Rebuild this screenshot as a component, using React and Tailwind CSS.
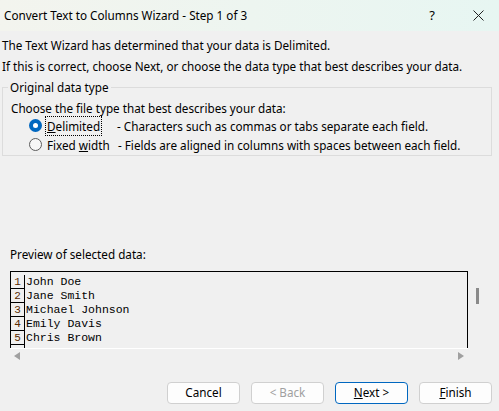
import React from 'react';

const ui = { fontFamily: '"Noto Sans", "Open Sans", sans-serif' };
const mono = { fontFamily: '"Liberation Mono", "Courier New", monospace' };

const rows = ['John Doe', 'Jane Smith', 'Michael Johnson', 'Emily Davis', 'Chris Brown'];

function Radio({ checked }) {
  return checked ? (
    <span className="block shrink-0 w-[13px] h-[13px] rounded-full bg-[#0067c0] flex items-center justify-center">
      <span className="block w-[5px] h-[5px] rounded-full bg-white" />
    </span>
  ) : (
    <span className="block shrink-0 w-[13px] h-[13px] rounded-full border border-[#5c5c5c] bg-[#f7f7f7]" />
  );
}

function Btn({ children, primary, disabled }) {
  return (
    <button
      className={`w-[73px] h-[22px] rounded-[4px] text-[11.7px] leading-none bg-[#fdfdfd] border ${
        primary ? 'border-[#0067c0]' : 'border-[#d0d0d0]'
      } ${disabled ? 'text-[#a0a0a0]' : 'text-black'}`}
    >
      {children}
    </button>
  );
}

export default function App() {
  return (
    <div className="w-[499px] h-[411px] bg-[#f0f0f0] flex flex-col text-black overflow-hidden" style={ui}>
      {/* title bar */}
      <div className="h-[31px] shrink-0 flex items-center bg-gradient-to-r from-[#f3f4ee] to-[#e7f6f2]">
        <span className="pl-[4px] text-[11.7px] flex-1">Convert Text to Columns Wizard - Step 1 of 3</span>
        <span className="w-[50px] text-center text-[13px]">?</span>
        <span className="w-[42px] flex justify-center">
          <svg width="11" height="11" viewBox="0 0 11 11">
            <path d="M0.5 0.5 L10.5 10.5 M10.5 0.5 L0.5 10.5" stroke="#222" strokeWidth="1" />
          </svg>
        </span>
      </div>

      <div className="flex flex-col text-[11.7px] leading-[16px]">
        <p className="pl-[2px] mt-[6px]">The Text Wizard has determined that your data is Delimited.</p>
        <p className="pl-[2px] mt-[5px]">If this is correct, choose Next, or choose the data type that best describes your data.</p>

        {/* group box */}
        <div className="relative mx-[2px] w-[490px] mt-[13px] h-[69px] border border-[#dcdcdc]">
          <span className="absolute left-[5px] -top-[9px] px-[2px] bg-[#f0f0f0]">Original data type</span>
          <p className="pl-[8px] mt-[12px]">Choose the file type that best describes your data:</p>
          <div className="flex items-center mt-[1px] h-[17px]">
            <span className="ml-[26px] mr-[3px]"><Radio checked /></span>
            <span className="w-[72px]">
              <span className="border border-dotted border-black px-[1px] py-[1px]">
                <span className="underline">D</span>elimited
              </span>
            </span>
            <span>- Characters such as commas or tabs separate each field.</span>
          </div>
          <div className="flex items-center mt-[2px] h-[17px]">
            <span className="ml-[26px] mr-[5px]"><Radio /></span>
            <span className="w-[71px]">
              Fixed <span className="underline">w</span>idth
            </span>
            <span>- Fields are aligned in columns with spaces between each field.</span>
          </div>
        </div>

        <p className="pl-[10px] mt-[90px]">Preview of selected data:</p>

        {/* preview */}
        <div className="flex mt-[9px]">
          <div className="ml-[10px] w-[458px] h-[77px] border-t border-l border-r border-black flex flex-col overflow-hidden">
            <div className="flex flex-col pt-[3px]" style={mono}>
              {rows.map((r, i) => (
                <div key={r} className="flex h-[14px] text-[11.5px] leading-[14px]">
                  <span className="w-[14px] border-r border-b border-black text-center text-[#5a2a00] text-[11px]">{i + 1}</span>
                  <span className="pl-[1px]">{r}</span>
                </div>
              ))}
              <div className="w-[14px] h-[4px] border-r border-black" />
            </div>
          </div>
          <div className="ml-[8px] mt-[17px] w-[3px] h-[16px] bg-[#8a8a8a]" />
        </div>
        <div className="ml-[10px] w-[458px] h-[14px] border-t border-white flex items-center justify-between px-[4px]">
          <svg width="6" height="8" viewBox="0 0 6 8"><path d="M6 0 L0 4 L6 8 Z" fill="#a0a0a0" /></svg>
          <svg width="6" height="8" viewBox="0 0 6 8"><path d="M0 0 L6 4 L0 8 Z" fill="#a0a0a0" /></svg>
        </div>

        {/* buttons */}
        <div className="flex justify-end gap-[11px] pr-[7px] mt-[20px]">
          <Btn>Cancel</Btn>
          <Btn disabled>&lt; Back</Btn>
          <Btn primary><span className="underline">N</span>ext &gt;</Btn>
          <Btn><span className="underline">F</span>inish</Btn>
        </div>
      </div>
    </div>
  );
}
